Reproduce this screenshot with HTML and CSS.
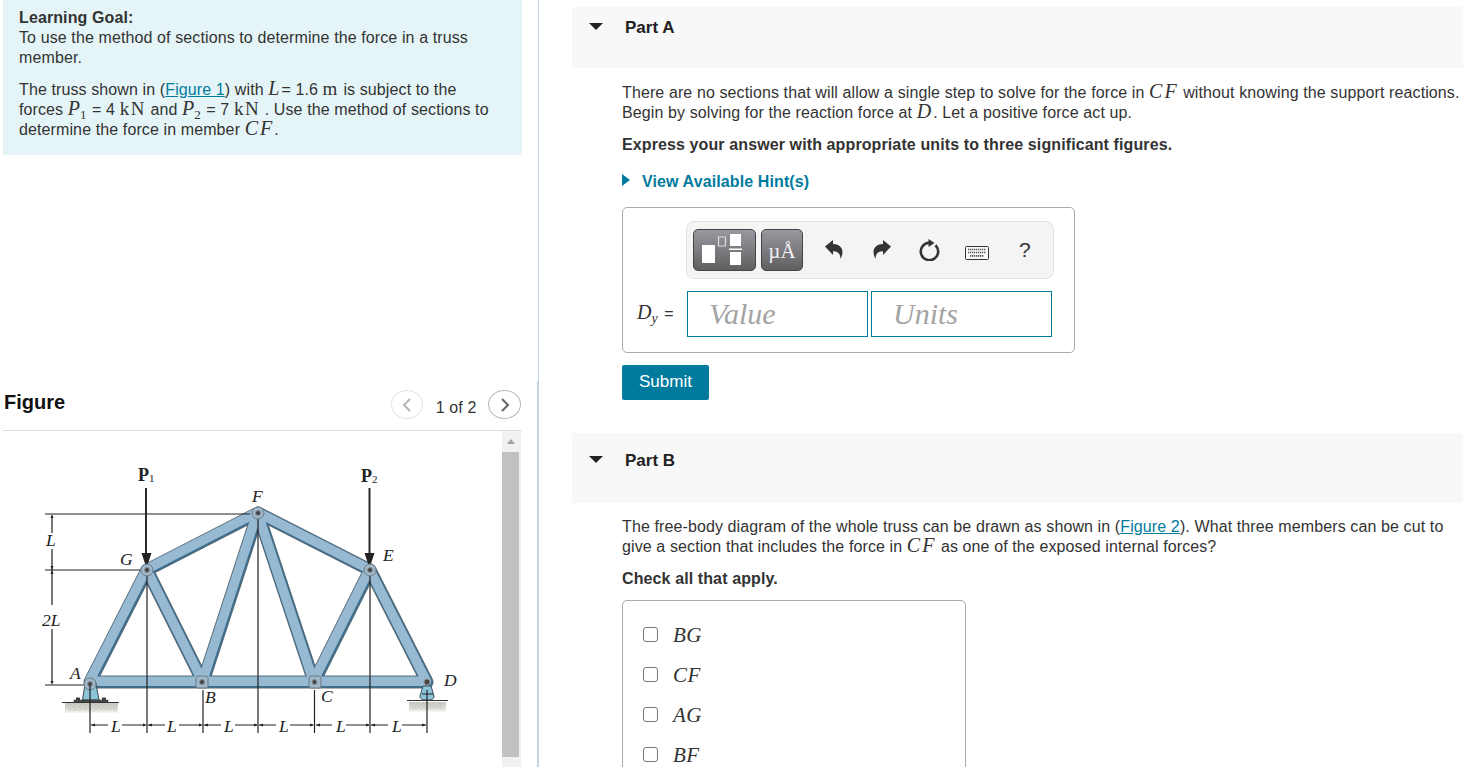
FILE: index.html
```
<!DOCTYPE html>
<html lang="en">
<head>
<meta charset="utf-8">
<title>Method of sections</title>
<link rel="stylesheet" href="styles.css">
</head>
<body>
<div class="page">
  <aside class="left">
    <section class="goal">
      <p class="goal-p"><strong>Learning Goal:</strong><br>To use the method of sections to determine the force in a truss member.</p>
      <p class="goal-p">The truss shown in (<a href="#f">Figure 1</a>) with <i class="m">L</i>= 1.6 <span class="mr">m</span> is subject to the forces <i class="mp">P</i><sub class="ms">1</sub> = 4 <span class="mr">kN</span> and <i class="mp">P</i><sub class="ms">2</sub> = 7 <span class="mr">kN</span> . Use the method of sections to determine the force in member <i class="m">CF</i>.</p>
    </section>
    <div class="lower">
    <header class="fig-head">
      <h2 class="fig-title">Figure</h2>
      <nav class="pager">
        <button class="pg pg-off" aria-label="Previous"><svg class="chev" viewBox="0 0 10 16"><path d="M8 2 2 8l6 6"/></svg></button>
        <span class="pg-text">1 of 2</span>
        <button class="pg" aria-label="Next"><svg class="chev" viewBox="0 0 10 16"><path d="M2 2l6 6-6 6"/></svg></button>
      </nav>
    </header>
    <div class="fig-body">
      <svg class="truss" viewBox="3 431 499 336" width="499" height="336">
        <defs>
          <path id="members" d="M90 682 147 570 258 513 370 570 427 682ZM147 570 203 682 258 513 314 682 370 570"/>
          <linearGradient id="soil" x1="0" y1="0" x2="0" y2="1"><stop offset="0" stop-color="#c8c8c0"/><stop offset=".6" stop-color="#dadad4"/><stop offset="1" stop-color="#f8f8f4"/></linearGradient>
          <pattern id="grit" width="5" height="4" patternUnits="userSpaceOnUse"><path class="grit" d="M0 1h1.500M3 3h1.500"/></pattern>
        </defs>
        <rect class="soil" x="65" y="703" width="53" height="10"/>
        <rect class="gritbox" x="67" y="703" width="49" height="8"/>
        <rect class="soil" x="409" y="702" width="37" height="10"/>
        <rect class="gritbox" x="412" y="702" width="31" height="7"/>
        <use href="#members" class="b1"/>
        <use href="#members" class="b2"/>
        <use href="#members" class="b3" transform="translate(-.6 -.8)"/>
        <path class="dim" d="M45 514H250M45 570H140M45 685H85M52 518V533M52 549V605M52 629V682M147 572V733M203 690V733M258 513V733M314.500 690V733M370 572V733"/>
        <path class="dim" d="M91 725H108M122 725H145M148 725H165M179 725H201M204 725H221M235 725H257M259 725H276M290 725H313M316 725H332M346 725H369M371 725H388M402 725H426"/>
        <path class="ar" d="M52 514l-1.500 4h3zM52 570l-1.500-4h3zM52 570l-1.500 4h3zM52 685l-1.500-4h3zM91 725l4-1.500v3zM147 725l-4-1.500v3zM148 725l4-1.500v3zM203 725l-4-1.500v3zM204 725l4-1.500v3zM258 725l-4-1.500v3zM259 725l4-1.500v3zM314 725l-4-1.500v3zM316 725l4-1.500v3zM370 725l-4-1.500v3zM371 725l4-1.500v3zM426 725l-4-1.500v3z"/>
        <path class="force" d="M146 488V558M369.500 488V558"/>
        <path class="ar" d="M141.500 553h10l-5 15zM364.500 553h10l-5 15z"/>
        <path class="base" d="M82.500 700 85 684a5.500 5.500 0 0 1 11 0l3 16z"/>
        <path class="bolts" d="M76 697.500h4v2.500h-4zM102 697.500h4v2.500h-4z"/>
        <rect class="plate" x="74" y="700" width="34" height="2"/>
        <path class="gline" d="M62 702.500H119M407 700.500H448"/>
        <path class="base" d="M420 696 423 686h8l3 10c0 3-2 4-7 4s-7-1-7-4z"/>
        <circle class="pin" cx="90" cy="684" r="6"/><circle class="pin-c" cx="90" cy="684" r="2.500"/>
        <circle class="pin" cx="147" cy="570" r="6"/><circle class="pin-c" cx="147" cy="570" r="2.500"/>
        <circle class="pin" cx="258" cy="513" r="6"/><circle class="pin-c" cx="258" cy="513" r="2.500"/>
        <circle class="pin" cx="370" cy="570" r="6"/><circle class="pin-c" cx="370" cy="570" r="2.500"/>
        <rect class="pin" x="196" y="676" width="12" height="12" rx="2"/><circle class="pin-c" cx="202" cy="682" r="2.500"/>
        <rect class="pin" x="309" y="676" width="12" height="12" rx="2"/><circle class="pin-c" cx="314.500" cy="682" r="2.500"/>
        <circle class="pin-c" cx="427" cy="682" r="3"/>
        <path class="dim" d="M90 686V733M427 690V733M422 694H433"/>
        <text class="bl" x="138" y="481">P<tspan class="sub" dy="1">1</tspan></text>
        <text class="bl" x="361" y="482">P<tspan class="sub" dy="1">2</tspan></text>
        <text class="lb" x="252" y="502">F</text>
        <text class="lb" x="120" y="565">G</text>
        <text class="lb" x="383" y="561">E</text>
        <text class="lb" x="70" y="679">A</text>
        <text class="lb" x="444" y="686">D</text>
        <text class="lb" x="205" y="703">B</text>
        <text class="lb" x="321" y="702">C</text>
        <text class="lb" x="46" y="546">L</text>
        <text class="lb" x="42" y="626">2L</text>
        <text class="lb" x="111" y="732">L</text>
        <text class="lb" x="167" y="732">L</text>
        <text class="lb" x="224" y="732">L</text>
        <text class="lb" x="279" y="732">L</text>
        <text class="lb" x="336" y="732">L</text>
        <text class="lb" x="392" y="732">L</text>
      </svg>
      <div class="scroll">
        <div class="sc-up"><span class="sc-tri"></span></div>
        <div class="sc-thumb"></div>
      </div>
    </div>
    </div>
  </aside>
  <main class="right">
    <section class="part">
      <header class="part-bar part-bar-a"><span class="tri-down"></span><h3 class="part-title">Part A</h3></header>
      <div class="part-body">
        <p class="txt txt-first">There are no sections that will allow a single step to solve for the force in <i class="m">CF</i> without knowing the support reactions. Begin by solving for the reaction force at <i class="m">D</i>. Let a positive force act up.</p>
        <p class="txt txt-b">Express your answer with appropriate units to three significant figures.</p>
        <a class="hint" href="#h"><span class="tri-right"></span>View Available Hint(s)</a>
        <div class="answer">
          <div class="toolbar">
            <button class="tb tb-tpl" aria-label="Templates">
              <svg viewBox="0 0 63 42" width="63" height="42"><path class="w" d="M9 16h13v18H9zM37 5h11v12H37zM36 19.500h13v1.500H36zM37 23h11v13H37z"/><path class="wo" d="M25.500 8h7v9h-7z"/></svg>
            </button>
            <button class="tb tb-sym">µÅ</button>
            <svg class="ic ic-undo" viewBox="0 0 18 19"><path d="M0 6.500 8 0v4c5.500 0 9.500 3.500 9.500 8 0 2.800-1 5-2.200 7 .5-4.500-2-7.700-7.300-7.700V15z"/></svg>
            <svg class="ic ic-redo" viewBox="0 0 18 19"><path d="M18 6.500 10 0v4C4.500 4 .5 7.500.5 12c0 2.800 1 5 2.200 7-.5-4.500 2-7.700 7.300-7.700V15z"/></svg>
            <svg class="ic ic-reset" viewBox="0 0 21 22"><path class="ring" d="M16.500 6.200a8.700 8.700 0 1 1-6.500-2.400"/><path d="M9.500 0v8l6-4z"/></svg>
            <svg class="ic ic-kb" viewBox="0 0 24 14"><rect class="kb-o" x=".5" y=".5" width="23" height="13" rx="1"/><path class="kb-k" d="M3 3.500H21M3 6.500H21M5 9.800H19"/></svg>
            <span class="tb-q">?</span>
          </div>
          <div class="row">
            <span class="lbl"><i class="mp">D</i><sub class="msi">y</sub> =</span>
            <input class="fld" placeholder="Value" aria-label="Value">
            <input class="fld" placeholder="Units" aria-label="Units">
          </div>
        </div>
        <button class="submit">Submit</button>
      </div>
    </section>
    <section class="part part-b">
      <header class="part-bar part-bar-b"><span class="tri-down"></span><h3 class="part-title">Part B</h3></header>
      <div class="part-body">
        <p class="txt txt-first-b">The free-body diagram of the whole truss can be drawn as shown in (<a href="#f2">Figure 2</a>). What three members can be cut to give a section that includes the force in <i class="m">CF</i> as one of the exposed internal forces?</p>
        <p class="txt txt-b">Check all that apply.</p>
        <ul class="checks">
          <li class="chk"><input class="cb" type="checkbox" aria-label="BG"><i class="chk-l">BG</i></li>
          <li class="chk"><input class="cb" type="checkbox" aria-label="CF"><i class="chk-l">CF</i></li>
          <li class="chk"><input class="cb" type="checkbox" aria-label="AG"><i class="chk-l">AG</i></li>
          <li class="chk"><input class="cb" type="checkbox" aria-label="BF"><i class="chk-l">BF</i></li>
        </ul>
      </div>
    </section>
  </main>
</div>
</body>
</html>
```
FILE: styles.css
```
* { box-sizing: border-box; }
html, body { margin: 0; height: 767px; overflow: hidden; background: #fff; }
body { font: 16px/20px "Liberation Sans", Arial, sans-serif; color: #333; letter-spacing: .11px; }
a { color: #007b9e; }
p { margin: 0; }
sub { line-height: 0; }

.page { display: flex; height: 767px; }
.left { width: 539px; flex: none; padding-left: 3px; border-right: 1px solid #c2d6e8; }
.lower { width: 535px; margin-top: 226px; height: 386px; border-right: 1px solid #bcd3e6; }
.right { width: 891px; flex: none; margin-left: 33px; padding-top: 7px; }

.m { font: italic 20px/0 "Liberation Serif", serif; letter-spacing: 2px; }
.mp { font: italic 20px/0 "Liberation Serif", serif; letter-spacing: 0; }
.mr { font: 19px/0 "Liberation Serif", serif; letter-spacing: 1.500px; }
.ms { font: 13px/0 "Liberation Serif", serif; letter-spacing: 1px; }
.msi { font: italic 14px/0 "Liberation Serif", serif; letter-spacing: 2px; }

.goal { width: 519px; height: 155px; padding: 8px 26px 7px 16px; background: #e5f5f7; }
.goal-p + .goal-p { margin-top: 12px; }

.fig-head { width: 519px; height: 50px; padding: 0 1px; display: flex; justify-content: space-between; align-items: flex-start; border-bottom: 1px solid #dcdcdc; }
.fig-title { margin: 10px 0 0; font: bold 20px/22px "Liberation Sans", Arial, sans-serif; letter-spacing: 0; color: #111; }
.pager { display: flex; align-items: center; margin-top: 9px; }
.pg { width: 33px; height: 29px; padding: 0; border: 1px solid #b9b9b9; border-radius: 50%; background: #fff; display: flex; align-items: center; justify-content: center; }
.pg-off { width: 32px; border-color: #e4e4e4; }
.pg-off .chev path { stroke: #b5b5b5; }
.pg-text { margin: 6px 11.500px 0 13px; }
.chev { width: 10px; height: 16px; }
.chev path { fill: none; stroke: #666; stroke-width: 2; }

.fig-body { width: 519px; height: 336px; display: flex; }
.truss { flex: none; display: block; }
.scroll { width: 19px; height: 336px; background: #f1f1f1; }
.sc-up { height: 21px; display: flex; align-items: center; justify-content: center; padding-right: 2px; }
.sc-tri { border: 4.5px solid transparent; border-top: 0; border-bottom: 5px solid #a3a3a3; }
.sc-thumb { width: 17px; height: 305px; background: #c1c1c1; }

.b1, .b2, .b3 { fill: none; stroke-linejoin: round; }
.b1 { stroke: #5f6a72; stroke-width: 13; }
.b2 { stroke: #3e6f8f; stroke-width: 11.500; }
.b3 { stroke: #97b9d1; stroke-width: 9.500; }
.dim { fill: none; stroke: #222; stroke-width: 1.200; }
.ar { fill: #222; }
.force { fill: none; stroke: #2a2a2a; stroke-width: 2; }
.soil { fill: url(#soil); }
.gritbox { fill: url(#grit); }
.grit { fill: none; stroke: #bdbdb6; stroke-width: 1; }
.base { fill: #8cc4da; stroke: #3c4a52; stroke-width: 1; }
.bolts { fill: #444; }
.plate { fill: #555; stroke: #222; stroke-width: .5; }
.gline { fill: none; stroke: #333; stroke-width: 1.200; }
.pin { fill: #9cb8ca; stroke: #6d7b85; stroke-width: 1; }
.pin-c { fill: #444; stroke: #8b9298; stroke-width: 1; }
.bl { font: bold 18px "Liberation Serif", serif; fill: #222; letter-spacing: 0; }
.sub { font: 11px "Liberation Serif", serif; }
.lb { font: italic 17.500px "Liberation Serif", serif; fill: #222; letter-spacing: 0; }

.part-bar { display: flex; background: #f8f8f8; padding-left: 17px; }
.part-bar-a { height: 61px; padding-top: 11px; }
.part-bar-b { height: 70px; padding-top: 18px; }
.tri-down { width: 0; height: 0; margin-top: 5px; border: 7px solid transparent; border-bottom: 0; border-top: 7px solid #222; }
.part-title { margin: 0 0 0 22px; font: bold 17px/20px "Liberation Sans", Arial, sans-serif; letter-spacing: 0; color: #222; }
.part-body { padding-left: 50px; }
.part-b { margin-top: 33px; }
.txt-first { margin-top: 15px; }
.txt-first-b { margin-top: 14px; width: 830px; }
.txt-b { margin-top: 12px; font-weight: bold; }

.hint { display: flex; align-items: center; margin-top: 17px; font-weight: bold; text-decoration: none; }
.tri-right { width: 0; height: 0; margin: -4px 12px 0 0; border: 6px solid transparent; border-right: 0; border-left: 8px solid #007b9e; }

.answer { width: 453px; height: 146px; margin-top: 15px; padding: 13px 20px 15px 14px; border: 1px solid #aaa; border-radius: 5px; }
.toolbar { width: 368px; height: 58px; margin-left: 49px; padding: 7px 0 0 6px; display: flex; background: #f4f4f4; border: 1px solid #e2e2e2; border-radius: 8px; }
.tb { height: 42px; padding: 0; border: 1px solid #444; border-radius: 5px; background: linear-gradient(#9a98a0, #5f5f60); color: #f2f2f2; display: block; }
.tb svg { display: block; margin: -1px; }
.tb-tpl { width: 63px; }
.tb-sym { width: 42px; margin-left: 5px; font: 21px/38px "Liberation Serif", serif; padding-top: 1px; }
.w { fill: #fff; }
.wo { fill: none; stroke: #ddd; stroke-width: 1.200; }
.ic { flex: none; fill: #333; }
.ic-undo { width: 18px; height: 19px; margin: 11px 0 0 22px; }
.ic-redo { width: 18px; height: 19px; margin: 11px 0 0 30px; }
.ic-reset { width: 21px; height: 22px; margin: 10px 0 0 28px; }
.ring { fill: none; stroke: #333; stroke-width: 2.600; }
.ic-kb { width: 24px; height: 14px; margin: 17px 0 0 25px; fill: none; }
.kb-o { fill: #f8f8f8; stroke: #333; }
.kb-k { stroke: #555; stroke-width: 1.700; stroke-dasharray: 1.300 .7; fill: none; }
.tb-q { margin: 10px 0 0 30px; font-size: 21px; line-height: 22px; color: #333; }

.row { display: flex; align-items: center; gap: 3px; margin-top: 12px; }
.lbl { width: 47px; font-size: 16px; }
.fld { width: 181px; height: 46px; padding: 0 0 0 21px; border: 1px solid #007b9e; border-radius: 0; font: italic 30px "Liberation Serif", serif; background: #fff; outline: 0; }
.fld::placeholder { color: #a3a3a3; opacity: 1; }

.submit { display: block; width: 87px; height: 35px; margin-top: 12px; padding: 0 0 2px; border: 0; border-radius: 2px; background: #007b9e; color: #fff; font: 17px/20px "Liberation Sans", Arial, sans-serif; }

.checks { width: 344px; height: 220px; margin: 11px 0 0; padding: 14px 0 0 20px; list-style: none; border: 1px solid #aaa; border-radius: 5px; }
.chk { height: 40px; display: flex; align-items: center; }
.cb { appearance: none; width: 15px; height: 15px; margin: -1px 15px 0 0; border: 1.500px solid #767676; border-radius: 3px; background: #fff; }
.chk-l { font: italic 21px "Liberation Serif", serif; letter-spacing: .5px; }
```
